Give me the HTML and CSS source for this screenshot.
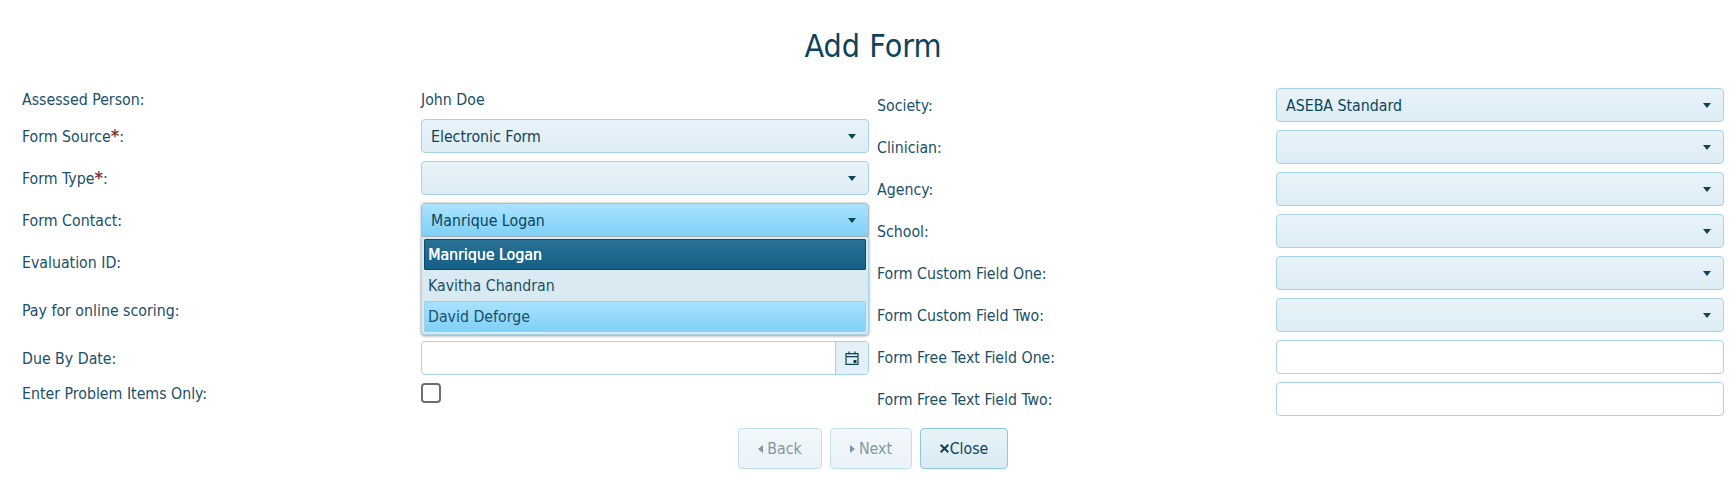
FILE: index.html
```html
<!DOCTYPE html>
<html lang="en">
<head>
<meta charset="utf-8">
<title>Add Form</title>
<link rel="stylesheet" href="styles.css">
</head>
<body>
<main class="page">
  <h1 class="title">Add Form</h1>
  <div class="columns">
    <div class="col col-left">
      <div class="row row-text"><span class="label">Assessed Person:</span><span class="value">John Doe</span></div>
      <div class="row"><span class="label">Form Source<b class="req">*</b>:</span><div class="select"><span>Electronic Form</span><i class="arrow"></i></div></div>
      <div class="row"><span class="label">Form Type<b class="req">*</b>:</span><div class="select"><span></span><i class="arrow"></i></div></div>
      <div class="row row-open"><span class="label">Form Contact:</span>
        <div class="combo">
          <div class="select select-open"><span>Manrique Logan</span><i class="arrow"></i></div>
          <ul class="popup">
            <li class="opt opt-selected">Manrique Logan</li>
            <li class="opt">Kavitha Chandran</li>
            <li class="opt opt-hover">David Deforge</li>
          </ul>
        </div>
      </div>
      <div class="row"><span class="label">Evaluation ID:</span></div>
      <div class="row row-pay"><span class="label">Pay for online scoring:</span></div>
      <div class="row"><span class="label">Due By Date:</span>
        <div class="date"><div class="date-input"></div><div class="date-btn">
          <svg class="cal" width="16" height="16" viewBox="0 0 16 16" fill="none" stroke="#0d4459" stroke-width="1.2"><path d="M2 3.6h12v10.8H2zM2 6.6h12M5 1.6v3M11 1.6v3"/><rect x="9.5" y="10" width="3" height="3" fill="#0d4459" stroke="none"/></svg>
        </div></div>
      </div>
      <div class="row row-check"><span class="label">Enter Problem Items Only:</span><span class="check"></span></div>
    </div>
    <div class="col col-right">
      <div class="row"><span class="label">Society:</span><div class="select"><span>ASEBA Standard</span><i class="arrow"></i></div></div>
      <div class="row"><span class="label">Clinician:</span><div class="select"><span></span><i class="arrow"></i></div></div>
      <div class="row"><span class="label">Agency:</span><div class="select"><span></span><i class="arrow"></i></div></div>
      <div class="row"><span class="label">School:</span><div class="select"><span></span><i class="arrow"></i></div></div>
      <div class="row"><span class="label">Form Custom Field One:</span><div class="select"><span></span><i class="arrow"></i></div></div>
      <div class="row"><span class="label">Form Custom Field Two:</span><div class="select"><span></span><i class="arrow"></i></div></div>
      <div class="row"><span class="label">Form Free Text Field One:</span><div class="input"></div></div>
      <div class="row"><span class="label">Form Free Text Field Two:</span><div class="input"></div></div>
    </div>
  </div>
  <div class="actions">
    <button class="btn btn-back" disabled><i class="tri tri-left"></i>Back</button>
    <button class="btn btn-next" disabled><i class="tri tri-right"></i>Next</button>
    <button class="btn btn-close"><svg class="x" width="9" height="9" viewBox="0 0 9 9" fill="none" stroke="#0d4459" stroke-width="2"><path d="M.7.7l7.6 7.6M8.3.7L.7 8.3"/></svg>Close</button>
  </div>
</main>
</body>
</html>
```

FILE: styles.css
```css
* { box-sizing: border-box; }
html, body { margin: 0; height: 100%; overflow: hidden; background: #fff; }
body { font-family: "DejaVu Sans Condensed", "DejaVu Sans", sans-serif; font-stretch: condensed; font-size: 15.75px; color: #0d4459; }
.page { padding: 0 11px 0 22px; }
.title { margin: 0; padding-top: 26px; height: 88px; font-size: 32px; line-height: 40px; font-weight: 400; text-align: center; color: #0d4459; }
.columns { display: grid; grid-template-columns: 855px 847px; }
.row { display: grid; grid-template-columns: 399px 448px; align-items: center; height: 34px; margin-bottom: 8px; }
.label { color: #1a5068; }
.req { color: #7b3b3f; font-weight: 700; font-size: 18px; line-height: 1; }
.value { color: #1a5068; }
.row-text { height: 23px; margin-bottom: 8px; }
.row-pay { height: 46px; }
.row-check { height: 20px; margin-top: 2px; }
.select {
  display: flex; align-items: center; justify-content: space-between;
  height: 34px; padding: 0 13px 0 9px;
  border: 1px solid #a6d3e6; border-radius: 4px;
  background: linear-gradient(#e8f3f9, #deedf5);
  color: #0d4459;
}
.arrow { width: 0; height: 0; margin-right: -1px; border-left: 4px solid transparent; border-right: 4px solid transparent; border-top: 5px solid #0d4459; }
.select-open {
  border-color: #b0bcc2; border-bottom-left-radius: 0; border-bottom-right-radius: 0;
  background: linear-gradient(#abe3ff, #7ed0f6);
  box-shadow: 0 0 3px rgba(0,0,0,.3);
}
.combo { position: relative; height: 34px; }
.popup {
  position: absolute; z-index: 2; top: 34px; left: 0; right: 0;
  margin: 0; padding: 2px 2px 3px; list-style: none; height: 98px;
  background: #d9eaf3; border: 1px solid #a6d3e6; border-top: 0;
  border-radius: 0 0 4px 4px; box-shadow: 0 1px 3px rgba(0,0,0,.4);
}
.opt { height: 31px; line-height: 31px; padding: 0 4px; color: #1a5068; border-radius: 2px; }
.opt-selected { background: linear-gradient(#2a7295, #145f85); color: #fff; text-shadow: .4px 0 0 #fff; box-shadow: inset 0 0 0 1px #0e4b68; }
.opt-hover { background: linear-gradient(#abe3ff, #7ed0f6); box-shadow: inset 0 0 0 1px #9bd2ea; }
.input { height: 34px; border: 1px solid #a6d3e6; border-radius: 4px; background: #fff; }
.date { display: flex; height: 34px; border: 1px solid #a6d3e6; border-radius: 4px; overflow: hidden; background: #fff; }
.date-input { flex: 1; }
.date-btn { width: 33px; display: flex; align-items: center; justify-content: center; border-left: 1px solid #a6d3e6; background: #e3f0f7; }
.check { display: block; width: 20px; height: 20px; border: 2px solid #6e6e6e; border-radius: 4px; background: #fff; }
.actions { display: flex; justify-content: center; gap: 8px; margin-top: 4px; }
.btn { display: flex; align-items: center; justify-content: center; height: 41px; padding: 0; border: 1px solid #8cc6de; border-radius: 4px; background: linear-gradient(#e8f3f9, #d9eaf3); color: #0d4459; font: inherit; }
.btn[disabled] { opacity: .55; }
.btn-back { width: 84px; }
.btn-next { width: 82px; }
.btn-close { width: 88px; }
.tri { width: 0; height: 0; margin-right: 4px; border-top: 4px solid transparent; border-bottom: 4px solid transparent; }
.tri-left { border-right: 5px solid #0d4459; }
.tri-right { border-left: 5px solid #0d4459; }
.x { margin-right: 1px; }
```
